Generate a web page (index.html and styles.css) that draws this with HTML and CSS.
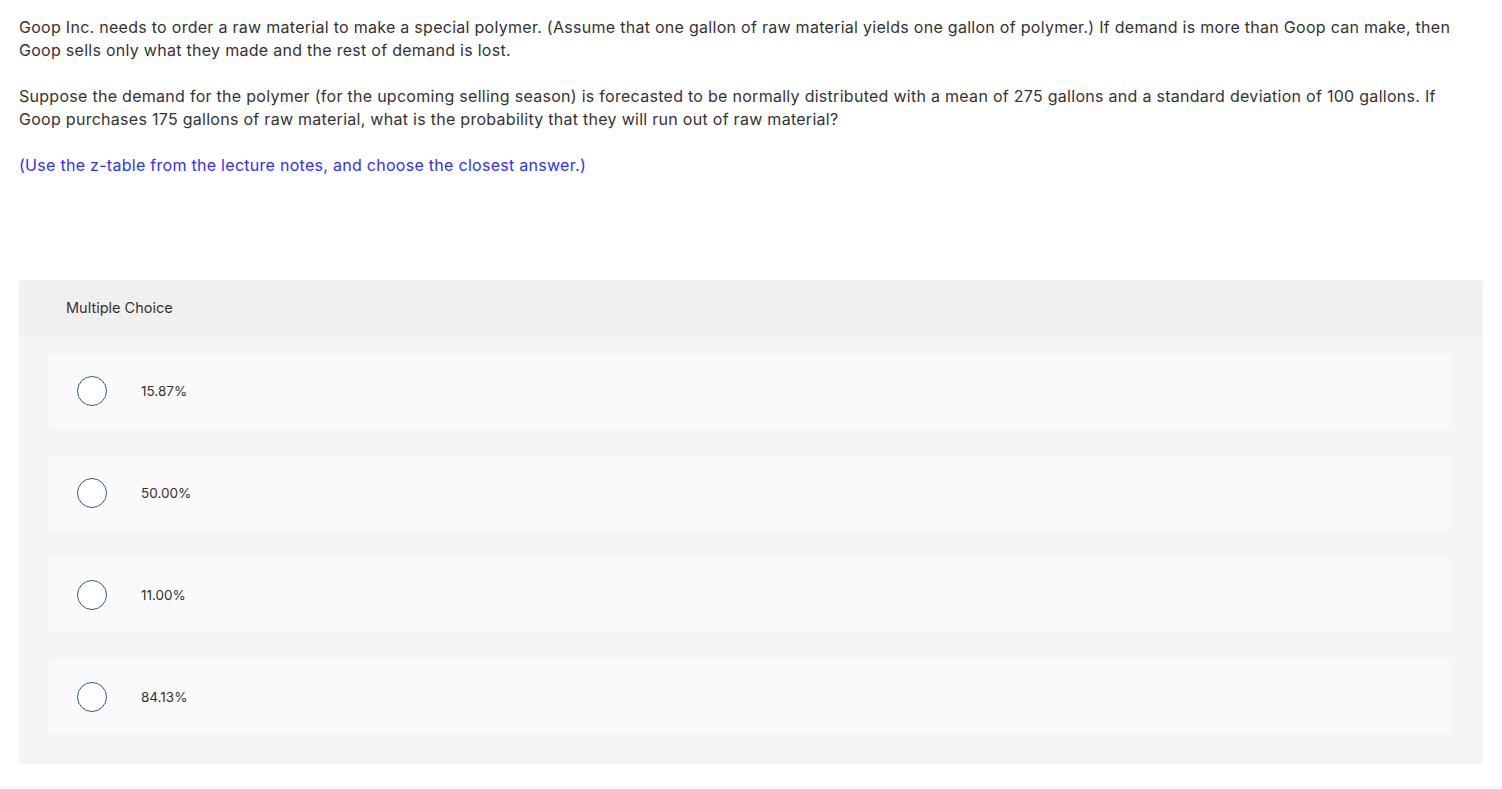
FILE: index.html
```html
<!DOCTYPE html>
<html>
<head>
<meta charset="utf-8">
<link rel="stylesheet" href="styles.css">
</head>
<body>
<div class="page">
  <div class="question">
    <p>Goop Inc. needs to order a raw material to make a special polymer. (Assume that one gallon of raw material yields one gallon of polymer.) If demand is more than Goop can make, then Goop sells only what they made and the rest of demand is lost.</p>
    <p>Suppose the demand for the polymer (for the upcoming selling season) is forecasted to be normally distributed with a mean of 275 gallons and a standard deviation of 100 gallons. If Goop purchases 175 gallons of raw material, what is the probability that they will run out of raw material?</p>
    <p class="hint">(Use the z-table from the lecture notes, and choose the closest answer.)</p>
  </div>
  <div class="mc">
    <div class="mc-header">Multiple Choice</div>
    <div class="mc-body">
      <div class="option"><span class="radio"></span><span class="label">15.87%</span></div>
      <div class="option"><span class="radio"></span><span class="label">50.00%</span></div>
      <div class="option"><span class="radio"></span><span class="label">11.00%</span></div>
      <div class="option"><span class="radio"></span><span class="label">84.13%</span></div>
    </div>
  </div>
  <div class="rule"></div>
</div>
</body>
</html>
```
FILE: styles.css
```css
html, body {
  margin: 0;
  padding: 0;
  background: #ffffff;
}
body {
  font-family: Inter, "Liberation Sans", sans-serif;
  color: #333333;
}
.page {
  padding: 16px 19px 0 19px;
}
.question {
  max-width: 1445px;
}
.question p {
  margin: 0 0 24px 0;
  font-size: 16px;
  line-height: 22.5px;
  letter-spacing: 0.28px;
}
.question p.hint {
  color: #2f2fff;
  margin-bottom: 0;
}
.mc {
  margin-top: 103px;
  width: 1464px;
  border-radius: 3px 3px 0 0;
  overflow: hidden;
}
.mc-header {
  background: #f0f0f0;
  height: 56px;
  padding-left: 47px;
  display: flex;
  align-items: center;
  font-size: 14.5px;
  color: #333333;
}
.mc-body {
  background: #f5f5f5;
  padding: 18px 32px 30px 30px;
  display: flex;
  flex-direction: column;
  gap: 28px;
}
.option {
  background: #fafafa;
  border-radius: 4px;
  height: 74px;
  display: flex;
  align-items: center;
  padding-left: 28px;
}
.radio {
  width: 28px;
  height: 28px;
  border: 1.5px solid #2d5b8f;
  border-radius: 50%;
  background: #ffffff;
  flex: none;
}
.label {
  margin-left: 34px;
  font-size: 13.5px;
  color: #333333;
}
.rule {
  margin: 22px -19px 0 -19px;
  border-top: 2px solid #f2f2f2;
}
```
